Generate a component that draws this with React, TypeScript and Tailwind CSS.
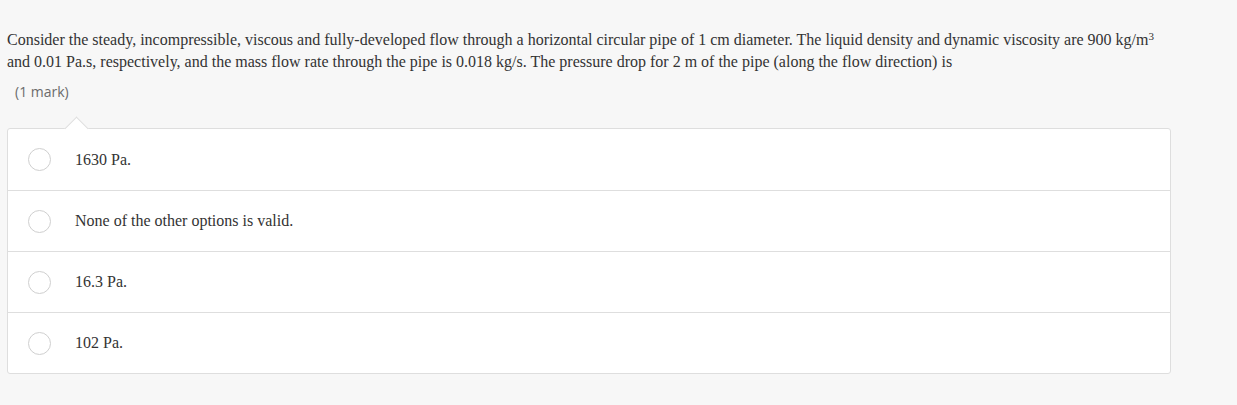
import React, { useState } from 'react';

const options = ['1630 Pa.', 'None of the other options is valid.', '16.3 Pa.', '102 Pa.'];

export default function App() {
  const [selected, setSelected] = useState<number | null>(null);

  return (
    <div className="min-h-[405px] bg-[#f7f7f7] pt-[29px] pl-[7px] pr-[66px]">
      <div
        className="text-[16px] leading-[22px] text-[#333]"
        style={{ fontFamily: '"Liberation Serif", "Times New Roman", serif' }}
      >
        Consider the steady, incompressible, viscous and fully-developed flow through a horizontal circular pipe of 1 cm diameter. The liquid density and dynamic viscosity are 900 kg/m
        <sup className="text-[11px]">3</sup> and 0.01 Pa.s, respectively, and the mass flow rate through the pipe is 0.018 kg/s. The pressure drop for 2 m of the pipe (along the flow direction) is
      </div>
      <div
        className="mt-[10px] pl-[8px] text-[14px] leading-[18px] text-[#6b6b6b]"
        style={{ fontFamily: '"Open Sans", sans-serif' }}
      >
        (1 mark)
      </div>

      <div className="relative mt-[27px] rounded-[3px] border border-[#dedede] bg-white">
        <div className="absolute -top-[9px] left-[60px] h-[17px] w-[17px] rotate-45 border-l border-t border-[#dedede] bg-white" />
        {options.map((opt, i) => (
          <div
            key={opt}
            onClick={() => setSelected(i)}
            className={`relative flex h-[61px] cursor-pointer items-center ${i > 0 ? 'border-t border-[#dedede]' : ''}`}
          >
            <span className="ml-[20px] flex h-[23px] w-[23px] items-center justify-center rounded-full border border-[#cfcfcf] bg-white">
              {selected === i && <span className="h-[11px] w-[11px] rounded-full bg-[#3a7bd5]" />}
            </span>
            <span
              className="ml-[24px] text-[16px] text-[#333]"
              style={{ fontFamily: '"Liberation Serif", "Times New Roman", serif' }}
            >
              {opt}
            </span>
          </div>
        ))}
      </div>
    </div>
  );
}
